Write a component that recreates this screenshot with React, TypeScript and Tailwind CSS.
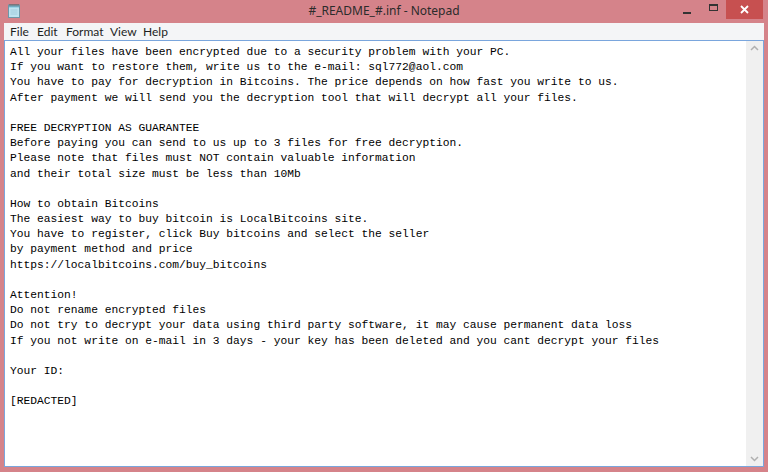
import React from "react";

const lines = [
  "All your files have been encrypted due to a security problem with your PC.",
  "If you want to restore them, write us to the e-mail: sql772@aol.com",
  "You have to pay for decryption in Bitcoins. The price depends on how fast you write to us.",
  "After payment we will send you the decryption tool that will decrypt all your files.",
  "",
  "FREE DECRYPTION AS GUARANTEE",
  "Before paying you can send to us up to 3 files for free decryption.",
  "Please note that files must NOT contain valuable information",
  "and their total size must be less than 10Mb",
  "",
  "How to obtain Bitcoins",
  "The easiest way to buy bitcoin is LocalBitcoins site.",
  "You have to register, click Buy bitcoins and select the seller",
  "by payment method and price",
  "https://localbitcoins.com/buy_bitcoins",
  "",
  "Attention!",
  "Do not rename encrypted files",
  "Do not try to decrypt your data using third party software, it may cause permanent data loss",
  "If you not write on e-mail in 3 days - your key has been deleted and you cant decrypt your files",
  "",
  "Your ID:",
  "",
  "[REDACTED]",
];

function NotepadIcon() {
  return (
    <svg width="14" height="15" viewBox="0 0 14 15">
      <rect x="1.5" y="2" width="11" height="12.5" fill="#bfe3f0" stroke="#6f97a8" />
      <rect x="2" y="2.5" width="10" height="2" fill="#7cc3dc" />
      <path d="M3 1v2.5M5 1v2.5M7 1v2.5M9 1v2.5M11 1v2.5" stroke="#555" strokeWidth="0.9" />
      <path d="M3.5 7h7M3.5 9h7M3.5 11h7" stroke="#9cc7d8" strokeWidth="0.8" />
    </svg>
  );
}

export default function App() {
  return (
    <div className="w-[768px] h-[472px] bg-[#d5838a] flex flex-col overflow-hidden" style={{ fontFamily: "'Noto Sans', 'Open Sans', sans-serif" }}>
      {/* title bar */}
      <div className="h-[23px] flex items-start relative shrink-0">
        <div className="pl-[7px] pt-[3px]">
          <NotepadIcon />
        </div>
        <div className="absolute left-0 right-0 top-[2px] text-center text-[12px] text-[#2b2b2b] leading-[18px]">
          #_README_#.inf - Notepad
        </div>
        <div className="ml-auto flex items-start">
          <div className="w-[26px] h-[19px] flex items-center justify-center">
            <div className="w-[8px] h-[2px] bg-[#333] mt-[6px]" />
          </div>
          <div className="w-[26px] h-[19px] flex items-start justify-center pt-[4px]">
            <div className="w-[9px] h-[7px] border border-[#333] border-t-2" />
          </div>
          <div className="w-[37px] h-[19px] bg-[#c75050] flex items-center justify-center mr-[5px]">
            <svg width="9" height="9" viewBox="0 0 9 9">
              <path d="M1 1L8 8M8 1L1 8" stroke="#fff" strokeWidth="1.8" />
            </svg>
          </div>
        </div>
      </div>
      {/* body */}
      <div className="flex-1 flex flex-col pl-[4px] pr-[4px] pb-[5px] min-h-0">
        <div
          className="h-[17px] bg-[#f4f5f7] flex items-center text-[12px] text-[#1e1e1e] shrink-0 pl-[6px] whitespace-nowrap"
          style={{ fontFamily: "Lato, 'Noto Sans', sans-serif" }}
        >
          <span className="w-[27px] shrink-0">File</span>
          <span className="w-[29px] shrink-0">Edit</span>
          <span className="w-[44px] shrink-0">Format</span>
          <span className="w-[33px] shrink-0">View</span>
          <span className="shrink-0">Help</span>
        </div>
        <div className="flex-1 flex border border-[#7aa6dd] bg-white min-h-0">
          <div
            className="flex-1 pl-[5px] pt-[4px] text-[11.27px] leading-[15.2px] text-[#000] whitespace-pre overflow-hidden"
            style={{ fontFamily: "'Liberation Mono', 'DejaVu Sans Mono', monospace" }}
          >
            {lines.map((l, i) => (
              <div key={i} className="h-[15.2px]">{l}</div>
            ))}
          </div>
          <div className="w-[17px] bg-[#f0f0f0] flex flex-col justify-between items-center py-[4px]">
            <svg width="9" height="6" viewBox="0 0 9 6">
              <path d="M1 5L4.5 1.5L8 5" stroke="#b0b0b0" strokeWidth="1.5" fill="none" />
            </svg>
            <svg width="9" height="6" viewBox="0 0 9 6">
              <path d="M1 1L4.5 4.5L8 1" stroke="#b0b0b0" strokeWidth="1.5" fill="none" />
            </svg>
          </div>
        </div>
      </div>
    </div>
  );
}
